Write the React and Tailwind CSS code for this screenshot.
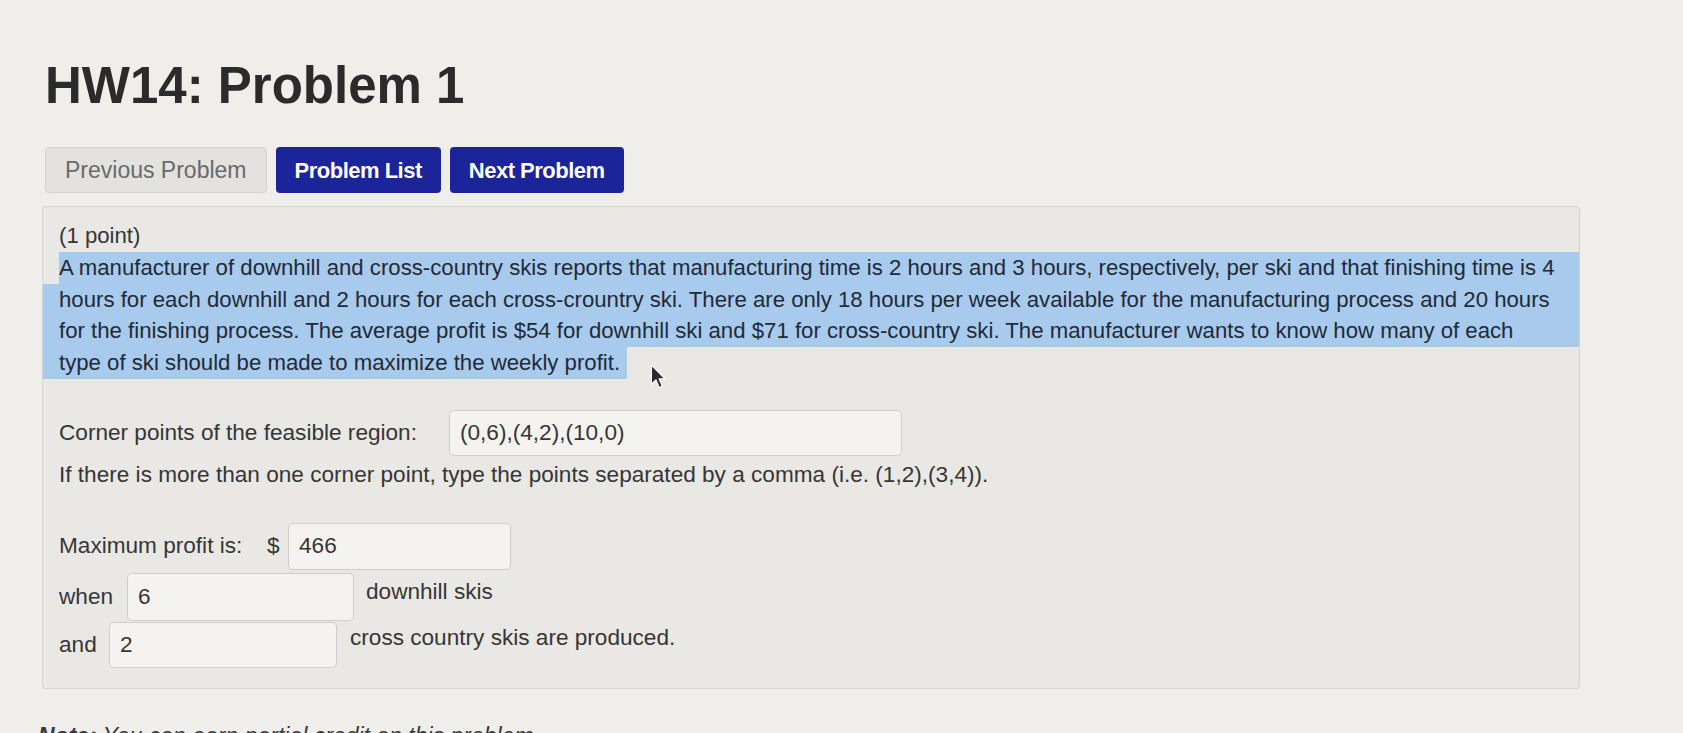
export default function App() {
  return (
    <div className="relative h-[733px] overflow-hidden bg-[#efeeea] pl-[42px] font-['Liberation_Sans',Arial,sans-serif] text-[#363636]">
      {/* Header */}
      <h1 className="pl-[3px] pt-[57px] text-[51px] font-bold leading-[57px] text-[#2b2b2b]">HW14: Problem 1</h1>

      {/* Navigation */}
      <div className="mt-[33px] flex gap-[9px] pl-[3px]">
        <button className="h-[46px] rounded-[4px] border border-[#d3d2ce] bg-[#e3e2de] px-[19px] text-[23px] text-[#6a6a6a]">
          Previous Problem
        </button>
        <button className="h-[46px] rounded-[4px] bg-[#1b2499] px-[19px] text-[22px] font-bold tracking-[-0.5px] text-white">
          Problem List
        </button>
        <button className="h-[46px] rounded-[4px] bg-[#1b2499] px-[19px] text-[22px] font-bold tracking-[-0.5px] text-white">
          Next Problem
        </button>
      </div>

      {/* Problem */}
      <div className="mt-[13px] w-[1538px] rounded-[3px] border border-[#d5d4d0] bg-[#e9e8e4] pb-[20px] pt-[13px] text-[22.6px] leading-[31.75px]">
        <div className="pl-[16px] text-[22.2px]">(1 point)</div>
        <div className="whitespace-nowrap text-[22.2px] text-[#1f2a38]">
          <div className="pl-[16px]">
            <div className="bg-[#a8caec]">
              A manufacturer of downhill and cross-country skis reports that manufacturing time is 2 hours and 3 hours, respectively, per ski and that finishing time is 4
            </div>
          </div>
          <div className="bg-[#a8caec] pl-[16px]">
            hours for each downhill and 2 hours for each cross-crountry ski. There are only 18 hours per week available for the manufacturing process and 20 hours
          </div>
          <div className="bg-[#a8caec] pl-[16px]">
            for the finishing process. The average profit is $54 for downhill ski and $71 for cross-country ski. The manufacturer wants to know how many of each
          </div>
          <div>
            <span className="inline-block bg-[#a8caec] pl-[16px] pr-[7px]">
              type of ski should be made to maximize the weekly profit.
            </span>
          </div>
        </div>

        <div className="pl-[16px]">
          <div className="mt-[31px] flex items-center">
            <span className="w-[390px]">Corner points of the feasible region:</span>
            <div className="flex h-[46px] w-[453px] items-center rounded-[5px] border border-[#cfcecb] bg-[#f4f3ef] px-[10px]">
              (0,6),(4,2),(10,0)
            </div>
          </div>
          <div className="mt-[3px] leading-[32px]">
            If there is more than one corner point, type the points separated by a comma (i.e. (1,2),(3,4)).
          </div>

          <div className="mt-[32px] flex items-center">
            <span className="w-[208px]">Maximum profit is:</span>
            <span className="w-[21px]">$</span>
            <div className="flex h-[47px] w-[223px] items-center rounded-[5px] border border-[#cfcecb] bg-[#f4f3ef] px-[10px]">
              466
            </div>
          </div>

          <div className="mt-[3px] flex items-center">
            <span className="w-[68px]">when</span>
            <div className="flex h-[48px] w-[227px] items-center rounded-[5px] border border-[#cfcecb] bg-[#f4f3ef] px-[10px]">
              6
            </div>
            <span className="ml-[12px] mt-[3px] self-start">downhill skis</span>
          </div>

          <div className="mt-[1px] flex items-center">
            <span className="w-[50px]">and</span>
            <div className="flex h-[46px] w-[228px] items-center rounded-[5px] border border-[#cfcecb] bg-[#f4f3ef] px-[10px]">
              2
            </div>
            <span className="ml-[13px] self-start">cross country skis are produced.</span>
          </div>
        </div>
      </div>

      <p className="-ml-[4px] mt-[31px] text-[23px] italic leading-[32px] text-[#3a3a3a]">
        <b>Note:</b> You can earn partial credit on this problem.
      </p>

      {/* Mouse pointer */}
      <svg className="absolute left-[650px] top-[364px]" width="17" height="26" viewBox="0 0 14 22">
        <path d="M1 1 L1 17 L4.8 13.4 L7.6 20 L10.2 18.9 L7.5 12.5 L12.5 12.5 Z" fill="#2a2a2a" stroke="#ffffff" strokeWidth="1" strokeLinejoin="round" />
      </svg>
    </div>
  );
}
